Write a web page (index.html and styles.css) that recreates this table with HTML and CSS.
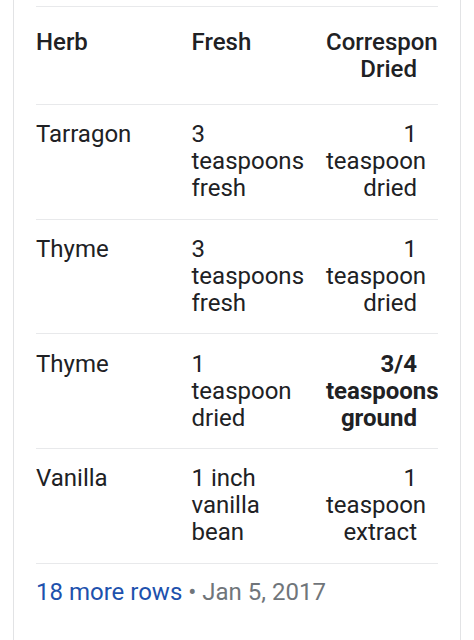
FILE: index.html
```html
<!DOCTYPE html>
<html>
<head>
<meta charset="utf-8">
<link rel="stylesheet" href="styles.css">
</head>
<body>
<div class="card">
  <div class="table">
    <div class="row head">
      <div class="cell">Herb</div>
      <div class="cell mid">Fresh</div>
      <div class="cell num">Corresponding Dried</div>
    </div>
    <div class="row">
      <div class="cell">Tarragon</div>
      <div class="cell mid">3 teaspoons fresh</div>
      <div class="cell num">1 teaspoon dried</div>
    </div>
    <div class="row">
      <div class="cell">Thyme</div>
      <div class="cell mid">3 teaspoons fresh</div>
      <div class="cell num">1 teaspoon dried</div>
    </div>
    <div class="row">
      <div class="cell">Thyme</div>
      <div class="cell mid">1 teaspoon dried</div>
      <div class="cell num strong">3/4 teaspoons ground</div>
    </div>
    <div class="row">
      <div class="cell">Vanilla</div>
      <div class="cell mid">1 inch vanilla bean</div>
      <div class="cell num">1 teaspoon extract</div>
    </div>
  </div>
  <div class="footer">
    <a class="more" href="#">18 more rows</a><span class="meta"> • Jan 5, 2017</span>
  </div>
</div>
</body>
</html>
```

FILE: styles.css
```css
html, body {
  margin: 0;
  padding: 0;
  background: #ffffff;
}

body {
  font-family: Roboto, "Noto Sans", sans-serif;
  color: #202124;
  font-size: 24px;
  line-height: 27px;
}

.card {
  margin: 0 13px;
  padding: 6px 22px 0;
  border: 1px solid #e2e3e5;
  border-top: none;
  min-height: 700px;
  box-sizing: border-box;
}

.table {
  overflow: hidden;
  border-top: 1px solid #e8e9eb;
}

.row {
  display: grid;
  grid-template-columns: 155.5px 134.5px 91px;
  padding: 16.3px 0 16.4px;
  border-bottom: 1px solid #e8e9eb;
}

.row.head {
  padding: 21.6px 0 21.4px;
  font-weight: 500;
}

.cell.mid {
  padding-right: 20.5px;
}

.cell.num {
  text-align: right;
}

.cell.strong {
  font-weight: 700;
}

.footer {
  padding: 15.6px 0 0;
}

.more {
  color: #1d51ad;
  text-decoration: none;
}

.meta {
  color: #70757a;
}
```
